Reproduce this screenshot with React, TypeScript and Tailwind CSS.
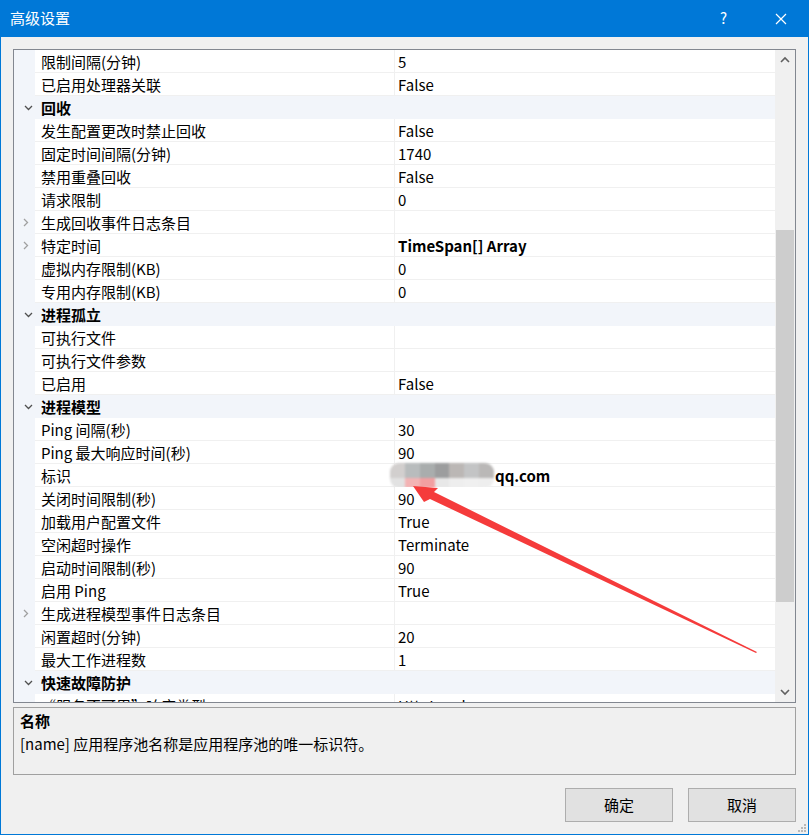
import React from "react";

type Row =
  | { kind: "cat"; name: string }
  | { kind: "prop"; name: string; value?: string; bold?: boolean; expand?: boolean; masked?: boolean };

const ROWS: Row[] = [
  { kind: "prop", name: "限制间隔(分钟)", value: "5" },
  { kind: "prop", name: "已启用处理器关联", value: "False" },
  { kind: "cat", name: "回收" },
  { kind: "prop", name: "发生配置更改时禁止回收", value: "False" },
  { kind: "prop", name: "固定时间间隔(分钟)", value: "1740" },
  { kind: "prop", name: "禁用重叠回收", value: "False" },
  { kind: "prop", name: "请求限制", value: "0" },
  { kind: "prop", name: "生成回收事件日志条目", expand: true },
  { kind: "prop", name: "特定时间", value: "TimeSpan[] Array", bold: true, expand: true },
  { kind: "prop", name: "虚拟内存限制(KB)", value: "0" },
  { kind: "prop", name: "专用内存限制(KB)", value: "0" },
  { kind: "cat", name: "进程孤立" },
  { kind: "prop", name: "可执行文件" },
  { kind: "prop", name: "可执行文件参数" },
  { kind: "prop", name: "已启用", value: "False" },
  { kind: "cat", name: "进程模型" },
  { kind: "prop", name: "Ping 间隔(秒)", value: "30" },
  { kind: "prop", name: "Ping 最大响应时间(秒)", value: "90" },
  { kind: "prop", name: "标识", value: "qq.com", bold: true, masked: true },
  { kind: "prop", name: "关闭时间限制(秒)", value: "90" },
  { kind: "prop", name: "加载用户配置文件", value: "True" },
  { kind: "prop", name: "空闲超时操作", value: "Terminate" },
  { kind: "prop", name: "启动时间限制(秒)", value: "90" },
  { kind: "prop", name: "启用 Ping", value: "True" },
  { kind: "prop", name: "生成进程模型事件日志条目", expand: true },
  { kind: "prop", name: "闲置超时(分钟)", value: "20" },
  { kind: "prop", name: "最大工作进程数", value: "1" },
  { kind: "cat", name: "快速故障防护" },
  { kind: "prop", name: "\u201c服务不可用\u201d响应类型", value: "HttpLevel" },
];

const MASK = ["#d2cfce", "#b8bcbd", "#a9adad", "#9c9d9e", "#bbb7b5", "#c3c4c5", "#bab8b7"];

function Chevron({ dir }: { dir: "down" | "right" }) {
  return (
    <svg width="9" height="9" viewBox="0 0 9 9" className="shrink-0">
      {dir === "down" ? (
        <path d="M1 3 L4.5 6.5 L8 3" fill="none" stroke="#505050" strokeWidth="1.3" />
      ) : (
        <path d="M3 1 L6.5 4.5 L3 8" fill="none" stroke="#a0a0a0" strokeWidth="1.3" />
      )}
    </svg>
  );
}

function GridRow({ row }: { row: Row }) {
  if (row.kind === "cat") {
    return (
      <div className="flex h-[23px] items-center bg-[#f2f5fa]">
        <div className="flex w-[27px] justify-center pl-[2px]">
          <Chevron dir="down" />
        </div>
        <span className="font-bold">{row.name}</span>
      </div>
    );
  }
  return (
    <div className="flex h-[23px]">
      <div className="flex w-[21px] shrink-0 items-center justify-center bg-[#f2f5fa] pl-[2px]">
        {row.expand && <Chevron dir="right" />}
      </div>
      <div className="flex w-[359px] shrink-0 items-center border-b border-[#f0f0f0] bg-white pl-[6px]">
        {row.name}
      </div>
      <div className="w-px shrink-0 bg-[#f0f0f0]" />
      <div className="relative flex flex-1 items-center border-b border-[#f0f0f0] bg-white pl-[3px]">
        {row.masked && (
          <div className="ml-[-8px] mr-[1px] flex h-[25px] w-[104px] flex-col overflow-hidden rounded-[9px] blur-[1px]">
            <div className="flex h-[15px]">
              {MASK.map((c, i) => (
                <div key={i} className="h-full flex-1" style={{ backgroundColor: c }} />
              ))}
            </div>
            <div className="flex h-[10px]">
              <div className="flex-1 bg-[#e2e2e2]" />
              <div className="flex-1 bg-[#f3b3b4]" />
              <div className="flex-1 bg-[#f29fa1]" />
              <div className="flex-1 bg-[#e8e8e8]" />
              <div className="flex-1 bg-[#eeeeee]" />
              <div className="flex-1 bg-[#f0f0f0]" />
              <div className="flex-1 bg-[#eeeeee]" />
            </div>
          </div>
        )}
        <span className={row.bold ? "font-bold" : ""}>{row.value}</span>
      </div>
    </div>
  );
}

export default function App() {
  return (
    <div
      className="relative flex h-[835px] w-[809px] flex-col bg-[#0078d7] text-[15px] text-black"
      style={{ fontFamily: '"Noto Sans CJK SC", "Noto Sans", sans-serif' }}
    >
      <div className="flex h-[37px] shrink-0 items-center text-white">
        <span className="pl-[10px] text-[15px]">高级设置</span>
        <div className="flex-1" />
        <span className="mr-[48px] text-[15px]">?</span>
        <svg width="12" height="12" viewBox="0 0 12 12" className="mr-[22px]">
          <path d="M1 1 L11 11 M11 1 L1 11" stroke="white" strokeWidth="1.2" />
        </svg>
      </div>

      <div className="mx-px mb-px flex flex-1 flex-col bg-[#f0f0f0] px-3 pt-3">
        <div className="flex h-[654px] shrink-0 border border-[#828790] bg-white">
          <div className="flex-1 overflow-hidden leading-none">
            {ROWS.map((r, i) => (
              <GridRow key={i} row={r} />
            ))}
          </div>
          <div className="flex w-[20px] shrink-0 flex-col bg-[#f0f0f0]">
            <div className="flex h-[20px] items-center justify-center">
              <svg width="10" height="8" viewBox="0 0 10 8">
                <path d="M1 6 L5 2 L9 6" fill="none" stroke="#606060" strokeWidth="1.6" />
              </svg>
            </div>
            <div className="h-[160px]" />
            <div className="mx-px h-[372px] bg-[#cdcdcd]" />
            <div className="flex-1" />
            <div className="flex h-[20px] items-center justify-center">
              <svg width="10" height="8" viewBox="0 0 10 8">
                <path d="M1 2 L5 6 L9 2" fill="none" stroke="#606060" strokeWidth="1.6" />
              </svg>
            </div>
          </div>
        </div>

        <div className="mt-[4px] flex h-[68px] flex-col border border-[#a0a0a0] px-[6px] pt-[1px] leading-[23px]">
          <span className="font-bold">名称</span>
          <span>[name] 应用程序池名称是应用程序池的唯一标识符。</span>
        </div>

        <div className="mt-[13px] flex justify-end gap-[15px]">
          <button className="h-[34px] w-[108px] border border-[#adadad] bg-[#e1e1e1]">确定</button>
          <button className="h-[34px] w-[108px] border border-[#adadad] bg-[#e1e1e1]">取消</button>
        </div>
      </div>

      <svg width="10" height="10" viewBox="0 0 10 10" className="absolute bottom-[2px] right-[2px]">
        <g fill="#b8b8b8">
          <rect x="7" y="1" width="2" height="2" />
          <rect x="4" y="4" width="2" height="2" />
          <rect x="7" y="4" width="2" height="2" />
          <rect x="1" y="7" width="2" height="2" />
          <rect x="4" y="7" width="2" height="2" />
          <rect x="7" y="7" width="2" height="2" />
        </g>
      </svg>

      <svg width="809" height="835" className="pointer-events-none absolute left-0 top-0">
        <polygon
          points="413,486 438,488 434,492 757,652 756,653 430,499 424,502"
          fill="#f53b3b"
        />
      </svg>
    </div>
  );
}
